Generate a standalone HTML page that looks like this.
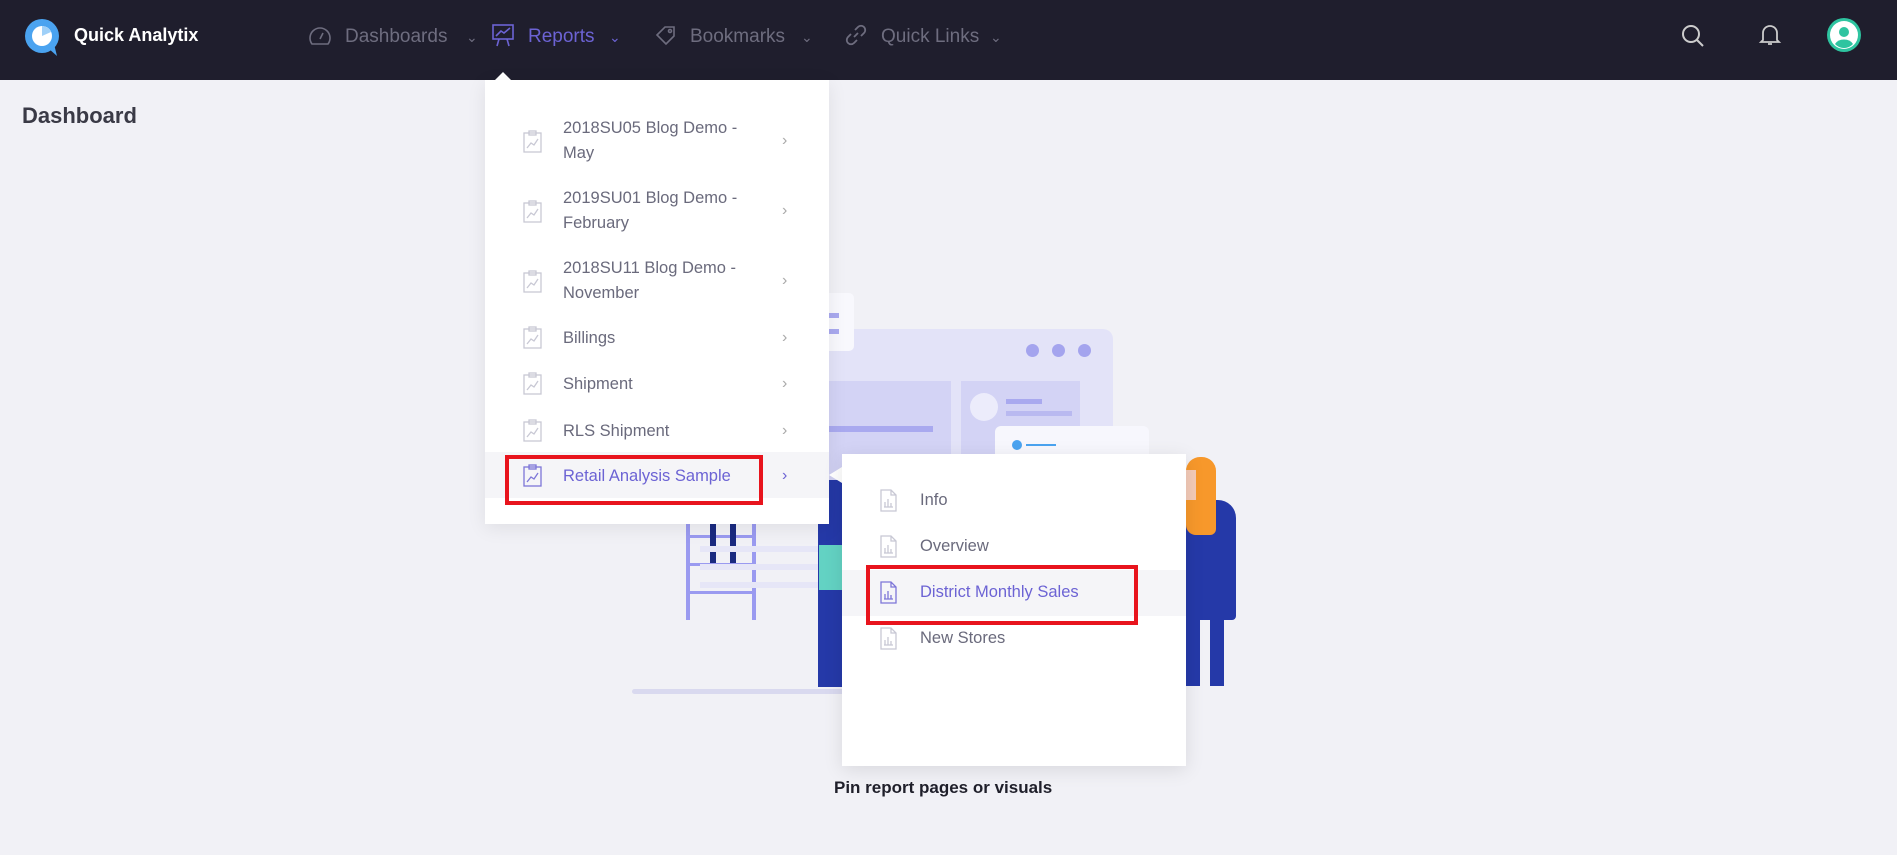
<!DOCTYPE html>
<html><head><meta charset="utf-8"><style>
*{margin:0;padding:0;box-sizing:border-box}
body{width:1897px;height:855px;overflow:hidden;background:#f1f1f6;font-family:"Liberation Sans",sans-serif;position:relative}
.nav{position:absolute;left:0;top:0;width:1897px;height:80px;background:#1f1e2d}
.abs{position:absolute}
.nt{position:absolute;top:26px;font-size:19px;color:#6e6d7f}
.menu{position:absolute;left:485px;top:80px;width:344px;height:444px;background:#fff;box-shadow:0 4px 18px rgba(0,0,0,.08)}
.mi{position:absolute;left:78px;font-size:16.5px;color:#6a6a7c;line-height:25px}
.ch{position:absolute;left:297px;color:#aaa;font-size:16px}
.sub{position:absolute;left:842px;top:454px;width:344px;height:312px;background:#fff;box-shadow:0 4px 18px rgba(0,0,0,.1)}
.si{position:absolute;left:78px;font-size:16.5px;color:#6a6a7c;line-height:20px}
</style></head><body>
<div class="nav">
 <svg class="abs" style="left:24px;top:18px" width="38" height="40" viewBox="0 0 38 40"><circle cx="18" cy="18" r="17" fill="#4aa3f0"/><path d="M24 30 L33 38 L30 26Z" fill="#4aa3f0"/><circle cx="18" cy="18" r="10" fill="#fff"/><path d="M18 18 L18 8 A10 10 0 0 1 27 14Z" fill="#9fd0f8"/></svg>
 <div class="abs" style="left:74px;top:25px;font-size:18px;color:#fff;font-weight:bold">Quick Analytix</div>
 <svg class="abs" style="left:308px;top:24px" width="24" height="24" fill="none" stroke="#6e6d7f" stroke-width="1.6"><path d="M4 20 A10 10 0 1 1 20 20 Z"/><path d="M12 15 L15 9"/></svg>
 <div class="nt" style="left:345px">Dashboards</div><div class="nt" style="left:466px;font-size:14px;top:29px">&#8964;</div>
 <svg class="abs" style="left:491px;top:22px" width="24" height="26" fill="none" stroke="#6c63d4" stroke-width="1.6"><rect x="2" y="3" width="20" height="14"/><path d="M5 14 L10 9 L13 11 L19 6 M8 17 L6 24 M16 17 L18 24"/></svg>
 <div class="nt" style="left:528px;color:#6c63d4">Reports</div><div class="nt" style="left:609px;font-size:14px;top:29px;color:#6c63d4">&#8964;</div>
 <svg class="abs" style="left:654px;top:24px" width="24" height="24" fill="none" stroke="#6e6d7f" stroke-width="1.6"><path d="M3 11 L11 3 H20 V12 L12 20 Z"/><circle cx="16" cy="7" r="1.5"/></svg>
 <div class="nt" style="left:690px">Bookmarks</div><div class="nt" style="left:801px;font-size:14px;top:29px">&#8964;</div>
 <svg class="abs" style="left:845px;top:24px" width="22" height="22" fill="none" stroke="#6e6d7f" stroke-width="1.8"><path d="M9 13 L13 9 M10 6 L13 3 A4 4 0 0 1 19 9 L16 12 M12 16 L9 19 A4 4 0 0 1 3 13 L6 10"/></svg>
 <div class="nt" style="left:881px">Quick Links</div><div class="nt" style="left:990px;font-size:14px;top:29px">&#8964;</div>
 <svg class="abs" style="left:1680px;top:23px" width="26" height="26" fill="none" stroke="#ccc" stroke-width="2"><circle cx="11" cy="11" r="8"/><path d="M17 17 L23 23"/></svg>
 <svg class="abs" style="left:1758px;top:22px" width="24" height="26" fill="none" stroke="#ccc" stroke-width="1.8"><path d="M5 18 V11 A7 7 0 0 1 19 11 V18 L21 20 H3 Z M10 22 H14"/></svg>
 <svg class="abs" style="left:1826px;top:17px" width="36" height="36"><circle cx="18" cy="18" r="17" fill="#2ec4a0"/><circle cx="18" cy="18" r="14" fill="#fff"/><circle cx="18" cy="15" r="5" fill="#2ec4a0"/><path d="M9 27 A10 8 0 0 1 27 27 A12 12 0 0 1 9 27Z" fill="#2ec4a0"/></svg>
 <div class="abs" style="left:495px;top:72px;width:0;height:0;border-left:8px solid transparent;border-right:8px solid transparent;border-bottom:8px solid #fff"></div>
</div>
<div class="abs" style="left:22px;top:103px;font-size:22px;font-weight:bold;color:#3a3a46">Dashboard</div>

<!-- illustration -->
<div class="abs" style="left:829px;top:329px;width:284px;height:170px;background:#e3e3f8;border-radius:10px"></div>
<div class="abs" style="left:1026px;top:344px;width:13px;height:13px;border-radius:50%;background:#a4a4ee;box-shadow:26px 0 #a4a4ee,52px 0 #a4a4ee"></div>
<div class="abs" style="left:829px;top:381px;width:122px;height:110px;background:#d3d3f5"></div>
<div class="abs" style="left:829px;top:426px;width:104px;height:6px;background:#a9a9ef"></div>
<div class="abs" style="left:961px;top:381px;width:119px;height:80px;background:#d3d3f5"></div>
<div class="abs" style="left:970px;top:393px;width:28px;height:28px;border-radius:50%;background:#ececfb"></div>
<div class="abs" style="left:1006px;top:399px;width:36px;height:5px;background:#a9a9ef"></div>
<div class="abs" style="left:1006px;top:411px;width:66px;height:5px;background:#b9b9f0"></div>
<div class="abs" style="left:995px;top:426px;width:154px;height:55px;background:#f7f7fd;border-radius:6px"></div>
<div class="abs" style="left:1012px;top:440px;width:10px;height:10px;border-radius:50%;background:#4aa3f0"></div>
<div class="abs" style="left:1026px;top:444px;width:30px;height:2px;background:#4aa3f0"></div>
<div class="abs" style="left:820px;top:293px;width:34px;height:58px;background:#f8f8fd;border-radius:5px"></div>
<div class="abs" style="left:829px;top:313px;width:10px;height:5px;background:#a9a9ef;box-shadow:0 16px #a9a9ef"></div>
<div class="abs" style="left:686px;top:523px;width:4px;height:97px;background:#9a9af0"></div>
<div class="abs" style="left:752px;top:523px;width:4px;height:97px;background:#9a9af0"></div>
<div class="abs" style="left:686px;top:535px;width:70px;height:3px;background:#9a9af0;box-shadow:0 28px #9a9af0,0 56px #9a9af0"></div>
<div class="abs" style="left:710px;top:523px;width:6px;height:40px;background:#1a2a80;box-shadow:20px 0 #1a2a80"></div>
<div class="abs" style="left:700px;top:546px;width:130px;height:6px;background:#e6e6f7;box-shadow:0 18px #e6e6f7,0 36px #e6e6f7"></div>
<div class="abs" style="left:632px;top:689px;width:220px;height:5px;background:#d9d9ef;border-radius:3px"></div>
<div class="abs" style="left:818px;top:480px;width:24px;height:207px;background:#2539a8;border-radius:10px 0 0 0"></div>
<div class="abs" style="left:819px;top:545px;width:23px;height:45px;background:#63d2c3"></div>
<div class="abs" style="left:1186px;top:500px;width:50px;height:120px;background:#2539a8;border-radius:6px 18px 4px 4px"></div>
<div class="abs" style="left:1186px;top:600px;width:14px;height:86px;background:#2539a8"></div>
<div class="abs" style="left:1210px;top:600px;width:14px;height:86px;background:#2539a8"></div>
<div class="abs" style="left:1186px;top:457px;width:30px;height:78px;background:#f7982b;border-radius:14px 14px 6px 10px"></div>
<div class="abs" style="left:1186px;top:470px;width:10px;height:30px;background:#f4cbb8"></div>

<div class="menu">
 <div class="abs" style="left:0;top:372px;width:344px;height:46px;background:#f5f5f8"></div>
 <div class="abs" style="left:20px;top:375px;width:258px;height:50px;border:4px solid #e8141d"></div>
 <div class="mi" style="top:36px">2018SU05 Blog Demo -<br>May</div><div class="ch" style="top:52px">&#8250;</div>
 <div class="mi" style="top:106px">2019SU01 Blog Demo -<br>February</div><div class="ch" style="top:122px">&#8250;</div>
 <div class="mi" style="top:176px">2018SU11 Blog Demo -<br>November</div><div class="ch" style="top:192px">&#8250;</div>
 <div class="mi" style="top:246px">Billings</div><div class="ch" style="top:249px">&#8250;</div>
 <div class="mi" style="top:292px">Shipment</div><div class="ch" style="top:295px">&#8250;</div>
 <div class="mi" style="top:339px">RLS Shipment</div><div class="ch" style="top:342px">&#8250;</div>
 <div class="mi" style="top:384px;color:#6c63d4">Retail Analysis Sample</div><div class="ch" style="top:387px;color:#6c63d4">&#8250;</div>
 <svg class="abs" style="left:38px;top:50px" width="20" height="400" fill="none" stroke="#c8c8d4" stroke-width="1.3">
  <g id="ic"><rect x="1" y="3" width="17" height="19"/><rect x="6" y="1" width="7" height="4"/><path d="M4 18 L8 13 L11 15 L15 9"/></g>
  <use href="#ic" y="70"/><use href="#ic" y="140"/><use href="#ic" y="196"/><use href="#ic" y="242"/><use href="#ic" y="289"/>
  <g transform="translate(0,334)" stroke="#7d76d8"><rect x="1" y="3" width="17" height="19"/><rect x="6" y="1" width="7" height="4"/><path d="M4 18 L8 13 L11 15 L15 9"/></g>
 </svg>
</div>
<div class="abs" style="left:829px;top:467px;width:0;height:0;border-top:8px solid transparent;border-bottom:8px solid transparent;border-right:13px solid #fff"></div>
<div class="sub">
 <div class="abs" style="left:0;top:116px;width:344px;height:46px;background:#f5f5f8"></div>
 <div class="abs" style="left:24px;top:111px;width:272px;height:60px;border:4px solid #e8141d"></div>
 <div class="si" style="top:36px">Info</div>
 <div class="si" style="top:82px">Overview</div>
 <div class="si" style="top:128px;color:#6c63d4">District Monthly Sales</div>
 <div class="si" style="top:174px">New Stores</div>
 <svg class="abs" style="left:38px;top:35px" width="20" height="200" fill="none" stroke="#c8c8d4" stroke-width="1.3">
  <g id="fi"><path d="M1 1 H11 L16 6 V22 H1 Z M11 1 V6 H16 M5 18 V13 M8 18 V10 M11 18 V14 M4 18 H13"/></g>
  <use href="#fi" y="46"/><use href="#fi" y="138"/>
  <g transform="translate(0,92)" stroke="#7d76d8"><path d="M1 1 H11 L16 6 V22 H1 Z M11 1 V6 H16 M5 18 V13 M8 18 V10 M11 18 V14 M4 18 H13"/></g>
 </svg>
</div>
<div class="abs" style="left:834px;top:778px;font-size:17px;font-weight:bold;color:#1f1f2a">Pin report pages or visuals</div>
</body></html>
